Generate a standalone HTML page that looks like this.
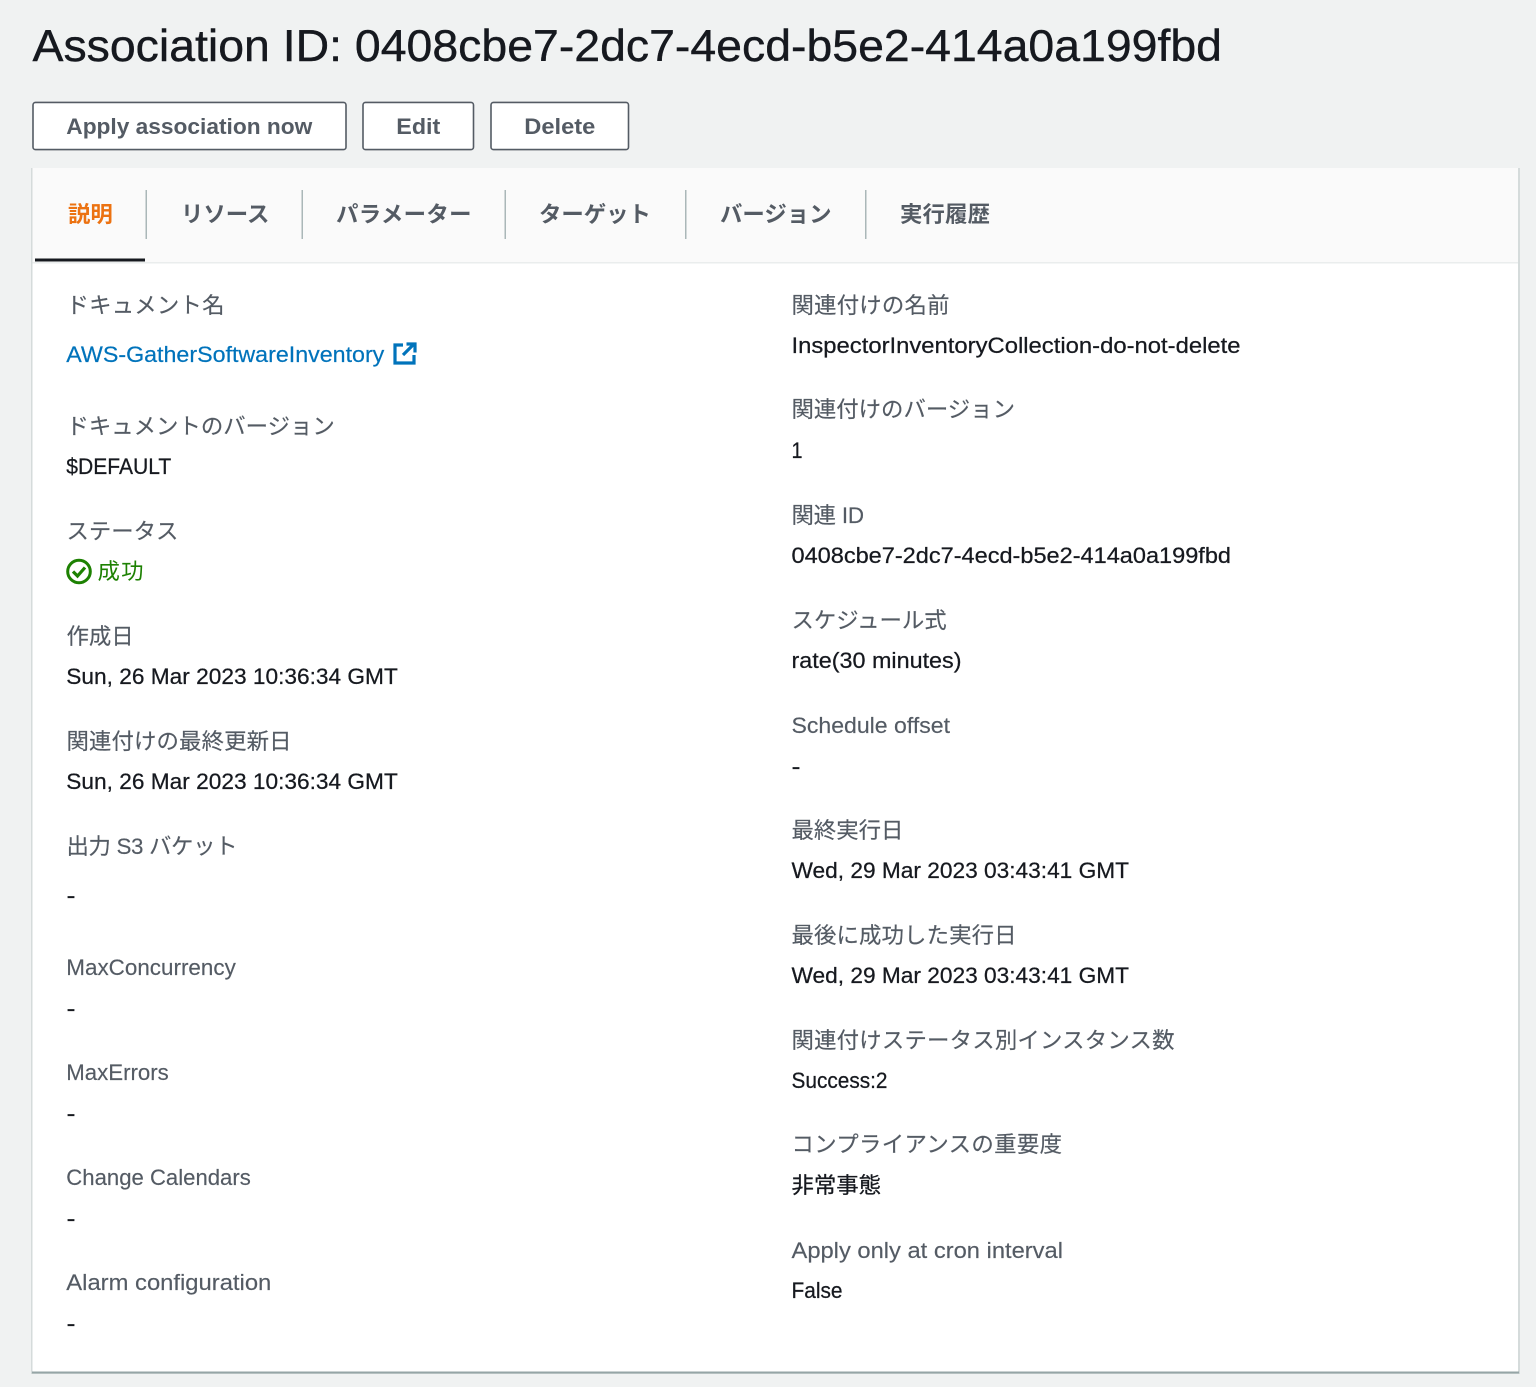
<!DOCTYPE html>
<html lang="ja">
<head>
<meta charset="utf-8">
<title>Association</title>
<style>
html,body{margin:0;padding:0;background:#f2f3f3;width:1536px;height:1387px;overflow:hidden}
svg{display:block}
text{font-family:"Liberation Sans","Noto Sans CJK JP",sans-serif;font-size:22.4px}
.l{fill:#545b64;stroke:#545b64;stroke-width:.15px}
.v{fill:#16191f;stroke:#16191f;stroke-width:.25px}
.b{fill:#545b64;font-weight:700}
.d{fill:#16191f}
</style>
</head>
<body>
<svg width="1536" height="1387" viewBox="0 0 1536 1387" xmlns="http://www.w3.org/2000/svg">
<rect width="1536" height="1387" fill="#f0f2f2"/>
<text x="32.500" y="61" style="font-size:44.8px;stroke:#16191f;stroke-width:.4px" fill="#16191f" textLength="1189.500" lengthAdjust="spacingAndGlyphs">Association ID: 0408cbe7-2dc7-4ecd-b5e2-414a0a199fbd</text>

<rect x="33" y="102.400" width="313" height="47.200" rx="2.500" fill="#fff" stroke="#545b64" stroke-width="1.600"/>
<rect x="363" y="102.400" width="110.500" height="47.200" rx="2.500" fill="#fff" stroke="#545b64" stroke-width="1.600"/>
<rect x="491" y="102.400" width="137.500" height="47.200" rx="2.500" fill="#fff" stroke="#545b64" stroke-width="1.600"/>
<text class="b" x="66.300" y="134" textLength="246" lengthAdjust="spacingAndGlyphs">Apply association now</text>
<text class="b" x="396.300" y="134" textLength="44" lengthAdjust="spacingAndGlyphs">Edit</text>
<text class="b" x="524.300" y="134" textLength="71" lengthAdjust="spacingAndGlyphs">Delete</text>

<rect x="31" y="168" width="1489" height="1206" fill="#d5dbdb"/>
<rect x="32" y="1371.500" width="1487" height="2" fill="#95a5a6"/>
<rect x="32.500" y="168" width="1485.500" height="1203.500" fill="#fff"/>
<rect x="32.500" y="168" width="1485.500" height="94" fill="#fafafa"/>
<rect x="32.500" y="262" width="1485.500" height="1.500" fill="#eaeded"/>

<g fill="#aab7b8">
<rect x="145.500" y="190" width="1.500" height="49"/>
<rect x="301.500" y="190" width="1.500" height="49"/>
<rect x="504.500" y="190" width="1.500" height="49"/>
<rect x="685" y="190" width="1.500" height="49"/>
<rect x="865" y="190" width="1.500" height="49"/>
</g>
<rect x="35" y="258.500" width="110" height="3" fill="#16191f"/>
<text x="68" y="222" style="font-weight:700" fill="#ec7211">説明</text>
<text class="b" x="181" y="222">リソース</text>
<text class="b" x="336" y="222" textLength="135.500">パラメーター</text>
<text class="b" x="539" y="222">ターゲット</text>
<text class="b" x="720" y="222">バージョン</text>
<text class="b" x="900" y="222" textLength="90">実行履歴</text>

<!-- left column -->
<text class="l" x="66.500" y="313" textLength="158">ドキュメント名</text>
<text x="66.300" y="362" fill="#0073bb" stroke="#0073bb" stroke-width=".2" textLength="318" lengthAdjust="spacingAndGlyphs">AWS-GatherSoftwareInventory</text>
<g fill="none" stroke="#0073bb" stroke-width="3.200">
<path d="M403 345H395V363H414V355"/>
<path d="M403 355L414 344"/>
<path d="M406.500 344H415V352.500"/>
</g>
<text class="l" x="66.500" y="434">ドキュメントのバージョン</text>
<text class="v" x="66.300" y="474" textLength="105" lengthAdjust="spacingAndGlyphs">$DEFAULT</text>
<text class="l" x="66.500" y="539">ステータス</text>
<circle cx="79" cy="571.500" r="11.300" fill="none" stroke="#1d8102" stroke-width="3"/>
<path d="M73 571.500L77.500 576L85 567.500" fill="none" stroke="#1d8102" stroke-width="3.200"/>
<text x="97.500" y="579" fill="#1d8102" textLength="46">成功</text>
<text class="l" x="66.500" y="644">作成日</text>
<text class="v" x="66.300" y="684" textLength="331.500" lengthAdjust="spacingAndGlyphs">Sun, 26 Mar 2023 10:36:34 GMT</text>
<text class="l" x="66.500" y="749" textLength="225">関連付けの最終更新日</text>
<text class="v" x="66.300" y="789" textLength="331.500" lengthAdjust="spacingAndGlyphs">Sun, 26 Mar 2023 10:36:34 GMT</text>
<text class="l" x="66.500" y="854" textLength="171">出力 S3 バケット</text>
<text class="v d" x="66.500" y="903" textLength="9" lengthAdjust="spacingAndGlyphs">-</text>
<text class="l" x="66.300" y="975" textLength="169.500" lengthAdjust="spacingAndGlyphs">MaxConcurrency</text>
<text class="v d" x="66.500" y="1016" textLength="9" lengthAdjust="spacingAndGlyphs">-</text>
<text class="l" x="66.300" y="1080" textLength="102.500" lengthAdjust="spacingAndGlyphs">MaxErrors</text>
<text class="v d" x="66.500" y="1121" textLength="9" lengthAdjust="spacingAndGlyphs">-</text>
<text class="l" x="66.300" y="1185" textLength="184.500" lengthAdjust="spacingAndGlyphs">Change Calendars</text>
<text class="v d" x="66.500" y="1226" textLength="9" lengthAdjust="spacingAndGlyphs">-</text>
<text class="l" x="66.300" y="1290" textLength="205" lengthAdjust="spacingAndGlyphs">Alarm configuration</text>
<text class="v d" x="66.500" y="1331" textLength="9" lengthAdjust="spacingAndGlyphs">-</text>

<!-- right column -->
<text class="l" x="791.500" y="313" textLength="158">関連付けの名前</text>
<text class="v" x="791.500" y="353" textLength="449" lengthAdjust="spacingAndGlyphs">InspectorInventoryCollection-do-not-delete</text>
<text class="l" x="791.500" y="417">関連付けのバージョン</text>
<text class="v" x="791.500" y="458" textLength="11" lengthAdjust="spacingAndGlyphs">1</text>
<text class="l" x="791.500" y="523" textLength="72.500">関連 ID</text>
<text class="v" x="791.500" y="563" textLength="439.500" lengthAdjust="spacingAndGlyphs">0408cbe7-2dc7-4ecd-b5e2-414a0a199fbd</text>
<text class="l" x="791.500" y="628">スケジュール式</text>
<text class="v" x="791.500" y="668" textLength="170" lengthAdjust="spacingAndGlyphs">rate(30 minutes)</text>
<text class="l" x="791.500" y="733" textLength="158.500" lengthAdjust="spacingAndGlyphs">Schedule offset</text>
<text class="v d" x="791.500" y="774" textLength="9" lengthAdjust="spacingAndGlyphs">-</text>
<text class="l" x="791.500" y="838">最終実行日</text>
<text class="v" x="791.500" y="878" textLength="337.500" lengthAdjust="spacingAndGlyphs">Wed, 29 Mar 2023 03:43:41 GMT</text>
<text class="l" x="791.500" y="943" textLength="225">最後に成功した実行日</text>
<text class="v" x="791.500" y="983" textLength="337.500" lengthAdjust="spacingAndGlyphs">Wed, 29 Mar 2023 03:43:41 GMT</text>
<text class="l" x="791.500" y="1048" textLength="383">関連付けステータス別インスタンス数</text>
<text class="v" x="791.500" y="1088" textLength="96" lengthAdjust="spacingAndGlyphs">Success:2</text>
<text class="l" x="791.500" y="1152" textLength="270.500">コンプライアンスの重要度</text>
<text class="v" x="791.500" y="1193">非常事態</text>
<text class="l" x="791.500" y="1258" textLength="271.500" lengthAdjust="spacingAndGlyphs">Apply only at cron interval</text>
<text class="v" x="791.500" y="1298" textLength="51" lengthAdjust="spacingAndGlyphs">False</text>
</svg>
</body>
</html>
